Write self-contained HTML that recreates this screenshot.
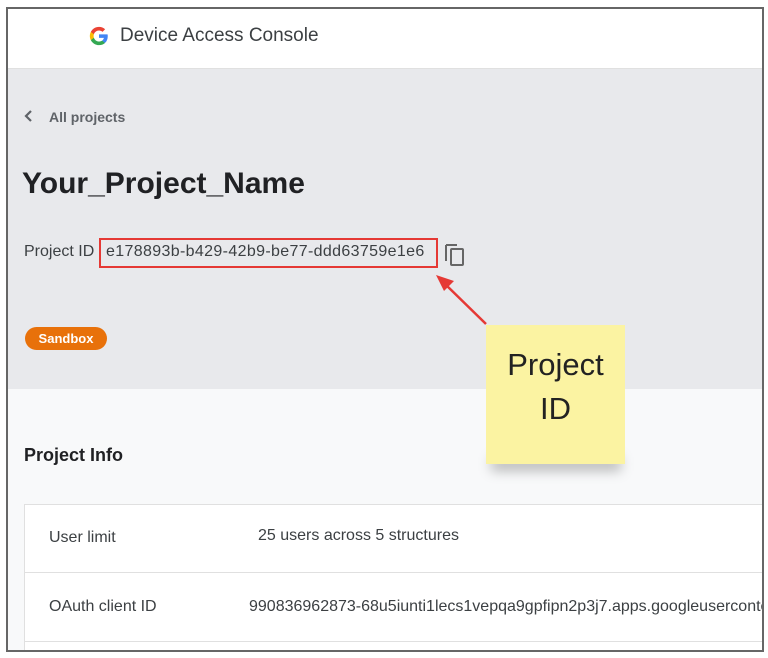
<!DOCTYPE html>
<html><head><style>
*{margin:0;padding:0;box-sizing:border-box}
body{width:768px;height:658px;background:#fff;position:relative;overflow:hidden;font-family:"Liberation Sans",sans-serif;color:#202124}
.frame{position:absolute;left:6px;top:7px;width:758px;height:645px;border:2px solid #666;overflow:hidden;background:#f8f9fa}
.hdr{position:absolute;left:0;top:0;right:0;height:60px;background:#fff;border-bottom:1px solid #e0e0e0}
.grey{position:absolute;left:0;top:60px;right:0;height:320px;background:#e8e9ec}
.a{position:absolute;white-space:nowrap}
</style></head><body>
<div class="frame">
<div class="hdr"></div>
<div class="grey"></div>
<svg class="a" style="left:81px;top:17px" width="20" height="20" viewBox="0 0 48 48"><path fill="#4285F4" d="M45 24.5c0-1.6-.1-3.1-.4-4.5H24v8.5h11.8c-.5 2.7-2.1 5-4.4 6.6v5.5h7.1c4.2-3.9 6.5-9.6 6.5-16.1z"/><path fill="#34A853" d="M24 46c5.9 0 10.9-2 14.5-5.3l-7.1-5.5c-2 1.3-4.5 2.1-7.4 2.1-5.7 0-10.6-3.9-12.3-9.1H4.4v5.7C8 41.1 15.4 46 24 46z"/><path fill="#FBBC05" d="M11.7 28.2c-.4-1.3-.7-2.7-.7-4.2s.3-2.9.7-4.2v-5.7H4.4C2.9 17.1 2 20.4 2 24s.9 6.9 2.4 9.9l7.3-5.7z"/><path fill="#EA4335" d="M24 10.7c3.2 0 6.1 1.1 8.4 3.3l6.3-6.3C34.9 4.2 29.9 2 24 2 15.4 2 8 6.9 4.4 14.1l7.3 5.7c1.7-5.2 6.6-9.1 12.3-9.1z"/></svg>
<div class="a" style="left:112px;top:14px;font-size:19px;color:#3c4043;line-height:26px">Device Access Console</div>
<svg class="a" style="left:16px;top:101px" width="10" height="12" viewBox="0 0 10 12"><path d="M7 1L2 6l5 5" stroke="#5f6368" stroke-width="2.2" fill="none"/></svg>
<div class="a" style="left:41px;top:100px;font-size:14px;color:#5f6368;font-weight:bold">All projects</div>
<div class="a" style="left:14px;top:158px;font-size:30px;font-weight:bold;color:#202124">Your_Project_Name</div>
<div class="a" style="left:16px;top:234px;font-size:16px;color:#3c4043">Project ID</div>
<div class="a" style="left:91px;top:229px;width:339px;height:30px;border:2px solid #e53935"></div>
<div class="a" style="left:98px;top:234px;font-size:16px;color:#3c4043;letter-spacing:0.35px">e178893b-b429-42b9-be77-ddd63759e1e6</div>
<svg class="a" style="left:435px;top:234px" width="24" height="26" viewBox="0 0 24 26"><path d="M3 2h11M3 2v16" stroke="#666" stroke-width="2" fill="none"/><rect x="8" y="6" width="12" height="16" rx="1" stroke="#666" stroke-width="2" fill="none"/></svg>
<div class="a" style="left:17px;top:318px;width:82px;height:23px;border-radius:12px;background:#e8710a;color:#fff;font-size:13px;font-weight:bold;text-align:center;line-height:23px">Sandbox</div>
<svg class="a" style="left:0;top:0" width="758" height="645"><line x1="478" y1="315" x2="436" y2="274" stroke="#e53935" stroke-width="2.5"/><polygon points="428,266 446,272 436,282" fill="#e53935"/></svg>
<div class="a" style="left:483px;top:448px;width:130px;height:14px;background:rgba(0,0,0,.25);filter:blur(6px)"></div>
<div class="a" style="left:478px;top:316px;width:139px;height:139px;background:#fbf3a2;font-size:31px;color:#222;text-align:center;line-height:44px;padding-top:18px">Project<br>ID</div>
<div class="a" style="left:16px;top:436px;font-size:18px;font-weight:bold">Project Info</div>
<div class="a" style="left:16px;top:495px;width:760px;height:160px;background:#fff;border:1px solid #e0e0e0"></div>
<div class="a" style="left:17px;top:563px;width:760px;height:1px;background:#e0e0e0"></div>
<div class="a" style="left:17px;top:632px;width:760px;height:1px;background:#e0e0e0"></div>
<div class="a" style="left:41px;top:520px;font-size:16px;color:#3c4043">User limit</div>
<div class="a" style="left:250px;top:518px;font-size:16px;color:#3c4043">25 users across 5 structures</div>
<div class="a" style="left:41px;top:589px;font-size:16px;color:#3c4043">OAuth client ID</div>
<div class="a" style="left:241px;top:589px;font-size:16px;color:#3c4043">990836962873-68u5iunti1lecs1vepqa9gpfipn2p3j7.apps.googleusercontent.com</div>
</div>
</body></html>
